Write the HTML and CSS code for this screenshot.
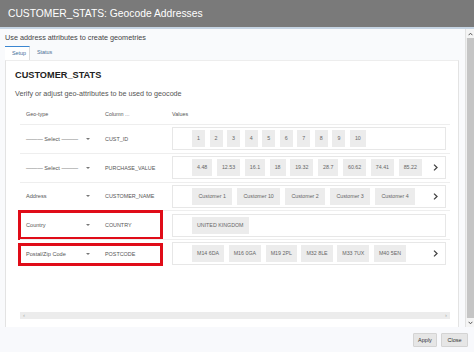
FILE: index.html
```html
<!DOCTYPE html>
<html>
<head>
<meta charset="utf-8">
<link rel="stylesheet" href="styles.css">
</head>
<body>
<div class="titlebar">CUSTOMER_STATS: Geocode Addresses</div>
<div class="middle">
  <div class="content">
    <div class="subtitle">Use address attributes to create geometries</div>
    <div class="tabs">
      <div class="tab active">Setup</div>
      <div class="tab">Status</div>
    </div>
    <div class="panel">
      <h1 class="heading">CUSTOMER_STATS</h1>
      <p class="desc">Verify or adjust geo-attributes to be used to geocode</p>
      <div class="table">
        <div class="thead">
          <span class="h-geo">Geo-type</span>
          <span class="h-col">Column ...</span>
          <span class="h-val">Values</span>
        </div>

        <div class="row">
          <div class="geo"><span>——— Select ———</span><span class="caret"></span></div>
          <div class="col">CUST_ID</div>
          <div class="vals">
            <div class="chips">
              <span class="chip">1</span><span class="chip">2</span><span class="chip">3</span><span class="chip">4</span><span class="chip">5</span><span class="chip">6</span><span class="chip">7</span><span class="chip">8</span><span class="chip">9</span><span class="chip">10</span>
            </div>
          </div>
        </div>

        <div class="row">
          <div class="geo"><span>——— Select ———</span><span class="caret"></span></div>
          <div class="col">PURCHASE_VALUE</div>
          <div class="vals">
            <div class="chips">
              <span class="chip">4.48</span><span class="chip">12.53</span><span class="chip">16.1</span><span class="chip">18</span><span class="chip">19.32</span><span class="chip">28.7</span><span class="chip">60.62</span><span class="chip">74.41</span><span class="chip">85.22</span>
            </div>
            <span class="next"><svg width="5" height="7" viewBox="0 0 5 7"><path d="M1 0.6 L4 3.5 L1 6.4" fill="none" stroke="#444" stroke-width="1.3"/></svg></span>
          </div>
        </div>

        <div class="row">
          <div class="geo"><span>Address</span><span class="caret"></span></div>
          <div class="col">CUSTOMER_NAME</div>
          <div class="vals">
            <div class="chips">
              <span class="chip wide">Customer 1</span><span class="chip wide">Customer 10</span><span class="chip wide">Customer 2</span><span class="chip wide">Customer 3</span><span class="chip wide">Customer 4</span>
            </div>
            <span class="next"><svg width="5" height="7" viewBox="0 0 5 7"><path d="M1 0.6 L4 3.5 L1 6.4" fill="none" stroke="#444" stroke-width="1.3"/></svg></span>
          </div>
        </div>

        <div class="row">
          <div class="geo"><span>Country</span><span class="caret"></span></div>
          <div class="col">COUNTRY</div>
          <div class="vals">
            <div class="chips">
              <span class="chip">UNITED KINGDOM</span>
            </div>
          </div>
          <div class="mark mark-country"></div>
        </div>

        <div class="row">
          <div class="geo"><span>Postal/Zip Code</span><span class="caret"></span></div>
          <div class="col">POSTCODE</div>
          <div class="vals">
            <div class="chips">
              <span class="chip">M14 6DA</span><span class="chip">M16 0GA</span><span class="chip">M19 2PL</span><span class="chip">M32 8LE</span><span class="chip">M33 7UX</span><span class="chip">M40 5EN</span>
            </div>
            <span class="next"><svg width="5" height="7" viewBox="0 0 5 7"><path d="M1 0.6 L4 3.5 L1 6.4" fill="none" stroke="#444" stroke-width="1.3"/></svg></span>
          </div>
          <div class="mark mark-postcode"></div>
        </div>
      </div>
      <div class="hscroll">
        <span class="harrow">‹</span>
        <span class="harrow">›</span>
      </div>
    </div>
  </div>
  <div class="vscroll">
    <div class="varrow">
      <svg width="5" height="4" viewBox="0 0 5 4"><path d="M0.6 3.2 L2.5 1.2 L4.4 3.2" fill="none" stroke="#555" stroke-width="1"/></svg>
    </div>
    <div class="thumb"></div>
    <div class="varrow">
      <svg width="5" height="4" viewBox="0 0 5 4"><path d="M0.6 0.8 L2.5 2.8 L4.4 0.8" fill="none" stroke="#555" stroke-width="1"/></svg>
    </div>
  </div>
</div>
<div class="footer">
  <button class="btn apply">Apply</button>
  <button class="btn close">Close</button>
</div>
</body>
</html>
```
FILE: styles.css
```css
* { box-sizing: border-box; }
html, body {
  margin: 0;
  padding: 0;
  width: 474px;
  height: 352px;
  overflow: hidden;
  background: #f8f9fc;
  font-family: "Liberation Sans", Arial, sans-serif;
  color: #555;
}

.titlebar {
  height: 29px;
  background: #7a7a7a;
  border-bottom: 2px solid #c6d5e4;
  color: #fff;
  font-size: 10.3px;
  line-height: 27px;
  padding-left: 8px;
  white-space: nowrap;
}

.middle {
  display: flex;
  height: 298px;
}

.content {
  width: 465px;
  background: #f9fafc;
}

.subtitle {
  height: 17px;
  line-height: 18px;
  padding-left: 5px;
  font-size: 7.27px;
  color: #444;
  white-space: nowrap;
}

.tabs {
  display: flex;
  height: 14px;
  padding-left: 5px;
}
.tab {
  font-size: 5.4px;
  line-height: 13px;
  padding-left: 7px;
  color: #4a6f95;
}
.tab.active {
  width: 25px;
  background: #fff;
  border-top: 1px solid #3b86d1;
  border-right: 1px solid #dcdcdc;
  color: #3f6d9b;
}

.panel {
  margin-left: 5px;
  width: 454px;
  height: 267px;
  background: #fff;
  border-left: 1px solid #e3e3e3;
  border-right: 1px solid #e3e3e3;
  border-top: 1px solid #ededed;
  padding-left: 9px;
}

.heading {
  margin: 7px 0 0;
  font-size: 9.2px;
  line-height: 14px;
  font-weight: bold;
  color: #222;
}

.desc {
  margin: 7px 0 0;
  font-size: 7.2px;
  line-height: 10px;
  color: #555;
  white-space: nowrap;
}

.table {
  margin: 5px 0 0 5px;
  width: 430px;
}

.thead {
  display: flex;
  height: 20px;
  align-items: center;
  font-size: 5.4px;
  color: #555;
}
.h-geo { width: 79px; padding-left: 6px; }
.h-col { width: 73px; padding-left: 6px; }

.row {
  position: relative;
  display: flex;
  align-items: center;
  height: 28.75px;
  border-top: 1px solid #eeeeee;
  font-size: 5.6px;
  color: #555;
}

.geo {
  width: 79px;
  padding: 0 9px 0 6px;
  display: flex;
  align-items: center;
  justify-content: space-between;
  white-space: nowrap;
}
.caret {
  width: 0;
  height: 0;
  border-left: 2px solid transparent;
  border-right: 2px solid transparent;
  border-top: 2.5px solid #777;
}

.col {
  width: 73px;
  padding-left: 6px;
  white-space: nowrap;
  font-size: 5.4px;
}

.vals {
  width: 274px;
  height: 23px;
  border: 1px solid #e7e7e7;
  padding-left: 19px;
  display: flex;
  align-items: center;
  overflow: hidden;
}
.chips {
  flex: 1;
  display: flex;
  gap: 4.6px;
  overflow: hidden;
  min-width: 0;
}
.chip {
  flex: none;
  height: 17px;
  line-height: 17px;
  padding: 0 5px;
  background: #ececec;
  color: #666;
  font-size: 5.3px;
  white-space: nowrap;
}
.chip.wide { padding: 0 6.5px; }

.next {
  flex: none;
  width: 16px;
  display: flex;
  justify-content: flex-end;
  padding-right: 7px;
}
.next svg { display: block; }

.mark {
  position: absolute;
  left: -2px;
  width: 145px;
  border: 3.5px solid #e00c18;
  pointer-events: none;
}
.mark-country { top: -1.5px; height: 30px; }
.mark-postcode { top: 2.5px; height: 23.5px; }

.hscroll {
  margin: 44px 0 0 5px;
  width: 430px;
  height: 7px;
  background: #ececec;
  display: flex;
  justify-content: space-between;
  align-items: center;
  padding: 0 3px;
  font-size: 6px;
  line-height: 7px;
  color: #aaa;
}

.vscroll {
  width: 9px;
  display: flex;
  flex-direction: column;
  background: #efefef;
  border-left: 1px solid #e2e2e2;
}
.varrow {
  height: 9px;
  display: flex;
  align-items: center;
  justify-content: center;
  background: #f4f4f4;
}
.varrow svg { display: block; }
.thumb {
  flex: 1;
  margin: 0 0 0 1px;
  background: #c5c5c5;
}

.footer {
  height: 25px;
  display: flex;
  justify-content: flex-end;
  align-items: center;
  gap: 4px;
  padding-right: 6px;
  background: #f8f9fc;
}
.btn {
  height: 14px;
  padding: 0;
  border: 1px solid #d4d4d4;
  border-radius: 1px;
  background: #e6e6e6;
  color: #333;
  font-family: "Liberation Sans", Arial, sans-serif;
  font-size: 5.5px;
}
.apply { width: 24px; }
.close { width: 27px; }
```
